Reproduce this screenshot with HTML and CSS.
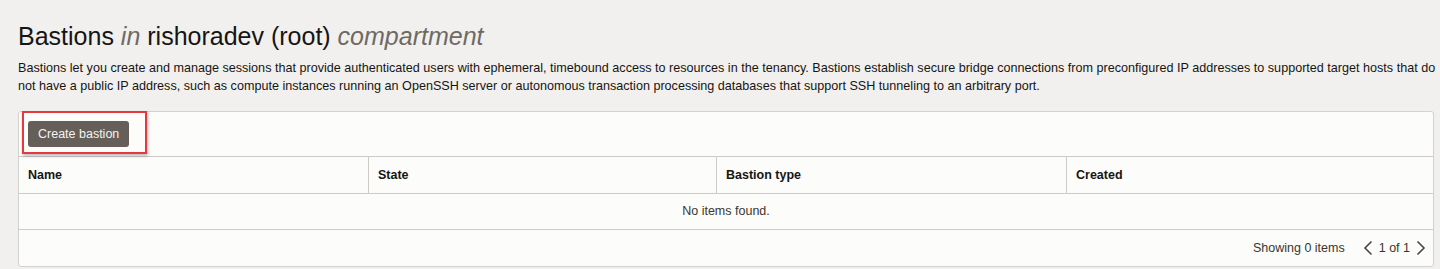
FILE: index.html
```html
<!DOCTYPE html>
<html lang="en">

<head>
    <meta charset="UTF-8">
    <meta name="viewport" content="width=device-width, initial-scale=1.0">
    <title>Bastions</title>
    <link rel="stylesheet" href="styles.css">
</head>

<body>
    <div class="wrapper">
        <h1 class="pageTitle">Bastions <em>in</em> rishoradev (root) <em>compartment</em></h1>
        <p class="pageDesc">Bastions let you create and manage sessions that provide authenticated users with ephemeral, timebound access to resources in the tenancy. Bastions establish secure bridge connections from preconfigured IP addresses to supported target hosts that do not have a public IP address, such as compute instances running an OpenSSH server or autonomous transaction processing databases that support SSH tunneling to an arbitrary port.</p>

        <section class="tableCard">
            <div class="toolbar">
                <button class="primaryBtn">Create bastion</button>
                <div class="highlight"></div>
            </div>
            <div class="headRow">
                <div class="headCell">Name</div>
                <div class="headCell">State</div>
                <div class="headCell">Bastion type</div>
                <div class="headCell">Created</div>
            </div>
            <div class="emptyRow">No items found.</div>
            <div class="footer">
                <span class="showing">Showing 0 items</span>
                <span class="pager">
                    <svg class="chev" width="10" height="16" viewBox="0 0 10 16">
                        <polyline points="8.5,1.5 2,8 8.5,14.5" fill="none" stroke="#4a4540" stroke-width="1.6" />
                    </svg>
                    <span>1 of 1</span>
                    <svg class="chev" width="10" height="16" viewBox="0 0 10 16">
                        <polyline points="1.5,1.5 8,8 1.5,14.5" fill="none" stroke="#4a4540" stroke-width="1.6" />
                    </svg>
                </span>
            </div>
        </section>
    </div>
</body>

</html>
```

FILE: styles.css
```css
* {
    margin: 0;
    padding: 0;
    box-sizing: border-box;
}

body {
    background: #f1f0ee;
    font-family: "Liberation Sans", Arial, sans-serif;
    color: #161513;
}

.wrapper {
    padding: 22px 6px 0 18px;
}

.pageTitle {
    font-size: 25px;
    line-height: 29px;
    font-weight: normal;
    color: #161513;
}

.pageTitle em {
    color: #6f6964;
}

.pageDesc {
    margin-top: 8px;
    margin-right: -4px;
    font-size: 12.6px;
    line-height: 18px;
    color: #161513;
}

.tableCard {
    margin-top: 16px;
    background: #fcfcfb;
    border: 1px solid #d4d2cf;
    border-radius: 3px;
}

.toolbar {
    position: relative;
    padding: 9px 9px;
    border-bottom: 1px solid #cdcbc8;
}

.primaryBtn {
    height: 26px;
    padding: 0 10px;
    border: none;
    border-radius: 3px;
    background: #655e59;
    color: #f5f3f0;
    font-family: "Liberation Sans", Arial, sans-serif;
    font-size: 12.5px;
}

.highlight {
    position: absolute;
    left: 3px;
    top: -1px;
    width: 125px;
    height: 43px;
    border: 2px solid #e5383f;
    box-shadow: 1px 2px 3px rgba(0, 0, 0, .25);
    pointer-events: none;
}

.headRow {
    display: grid;
    grid-template-columns: 349px 348px 350px auto;
    height: 37px;
    border-bottom: 1px solid #cdcbc8;
}

.headCell {
    padding-left: 9px;
    font-size: 12.5px;
    font-weight: bold;
    line-height: 36px;
}

.headCell + .headCell {
    border-left: 1px solid #cdcbc8;
}

.emptyRow {
    height: 36px;
    line-height: 35px;
    text-align: center;
    font-size: 12.5px;
    color: #3a3631;
    border-bottom: 1px solid #cdcbc8;
}

.footer {
    height: 36px;
    display: flex;
    align-items: center;
    justify-content: flex-end;
    gap: 18px;
    padding-right: 7px;
    font-size: 12.5px;
    color: #3a3631;
}

.pager {
    display: flex;
    align-items: center;
    gap: 6px;
}

.chev {
    display: block;
}
```
